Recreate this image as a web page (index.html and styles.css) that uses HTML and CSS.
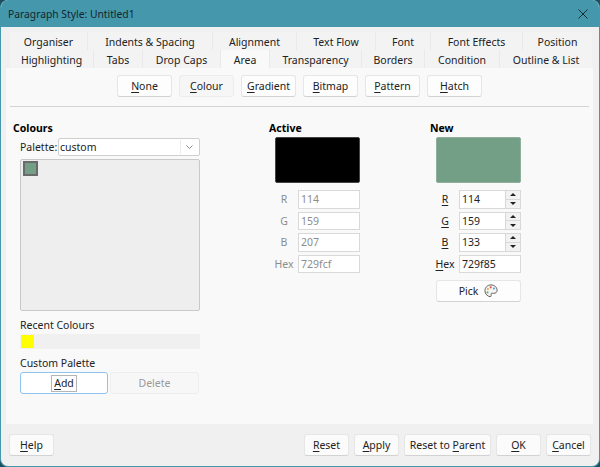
FILE: index.html
```html
<!DOCTYPE html>
<html lang="en">
<head>
    <meta charset="UTF-8">
    <meta name="viewport" content="width=device-width, initial-scale=1.0">
    <title>Paragraph Style: Untitled1</title>
    <link rel="stylesheet" href="styles.css">
</head>
<body>
    <div class="dialog">
        <div class="titlebar">
            <span class="title">Paragraph Style: Untitled1</span>
            <svg class="close-icon" width="10" height="10" viewBox="0 0 10 10">
                <path d="M0.5 0.5L9.5 9.5M9.5 0.5L0.5 9.5" stroke="#1a2a30" stroke-width="1" fill="none"/>
            </svg>
        </div>

        <div class="tabs">
            <div class="tab-row">
                <div class="tab t-organiser">Organiser</div>
                <div class="tab t-indents">Indents &amp; Spacing</div>
                <div class="tab t-alignment">Alignment</div>
                <div class="tab t-textflow">Text Flow</div>
                <div class="tab t-font">Font</div>
                <div class="tab t-effects">Font Effects</div>
                <div class="tab t-position">Position</div>
            </div>
            <div class="tab-row">
                <div class="tab t-highlight">Highlighting</div>
                <div class="tab t-tabs">Tabs</div>
                <div class="tab t-dropcaps">Drop Caps</div>
                <div class="tab t-area active">Area</div>
                <div class="tab t-transparency">Transparency</div>
                <div class="tab t-borders">Borders</div>
                <div class="tab t-condition">Condition</div>
                <div class="tab t-outline">Outline &amp; List</div>
            </div>
        </div>

        <div class="panel">
            <div class="fill-types">
                <button class="btn type-btn"><u>N</u>one</button>
                <button class="btn type-btn pressed"><u>C</u>olour</button>
                <button class="btn type-btn"><u>G</u>radient</button>
                <button class="btn type-btn"><u>B</u>itmap</button>
                <button class="btn type-btn"><u>P</u>attern</button>
                <button class="btn type-btn"><u>H</u>atch</button>
            </div>
            <div class="separator"></div>

            <div class="columns">
                <div class="col-colours">
                    <div class="heading">Colours</div>
                    <div class="palette-row">
                        <span>Palette:</span>
                        <div class="select">
                            <span class="select-value">custom</span>
                            <span class="select-arrow">
                                <svg width="7" height="4" viewBox="0 0 7 4"><path d="M0.5 0.5L3.5 3.5L6.5 0.5" stroke="#8a8a8a" fill="none"/></svg>
                            </span>
                        </div>
                    </div>
                    <div class="swatches">
                        <div class="swatch"></div>
                    </div>
                    <div class="sub-label recent-label">Recent Colours</div>
                    <div class="recent">
                        <div class="recent-swatch"></div>
                    </div>
                    <div class="sub-label custom-label">Custom Palette</div>
                    <div class="palette-actions">
                        <button class="btn action focused"><span class="focus-ring"><u>A</u>dd</span></button>
                        <button class="btn action disabled">Delete</button>
                    </div>
                </div>

                <div class="col-active">
                    <div class="heading">Active</div>
                    <div class="preview preview-active"></div>
                    <div class="fields muted">
                        <div class="field"><label>R</label><div class="input">114</div></div>
                        <div class="field"><label>G</label><div class="input">159</div></div>
                        <div class="field"><label>B</label><div class="input">207</div></div>
                        <div class="field"><label>Hex</label><div class="input">729fcf</div></div>
                    </div>
                </div>

                <div class="col-new">
                    <div class="heading">New</div>
                    <div class="preview preview-new"></div>
                    <div class="fields">
                        <div class="field">
                            <label><u>R</u></label>
                            <div class="spin"><div class="input">114</div><div class="spin-btns"><span class="up"></span><span class="down"></span></div></div>
                        </div>
                        <div class="field">
                            <label><u>G</u></label>
                            <div class="spin"><div class="input">159</div><div class="spin-btns"><span class="up"></span><span class="down"></span></div></div>
                        </div>
                        <div class="field">
                            <label><u>B</u></label>
                            <div class="spin"><div class="input">133</div><div class="spin-btns"><span class="up"></span><span class="down"></span></div></div>
                        </div>
                        <div class="field"><label><u>H</u>ex</label><div class="input input-hex">729f85</div></div>
                    </div>
                    <button class="btn pick">Pick
                        <svg width="14" height="14" viewBox="0 0 15 15">
                            <path d="M7.5 1C3.6 1 1 3.8 1 7.2c0 3.4 2.8 6.3 5.6 6.3 1.5 0 1.4-1.3 1-2-.4-.9.2-1.7 1.2-1.6 1 .1 2.1.3 3.4-.2 1.3-.6 1.8-1.7 1.8-2.9C14 3.4 11.2 1 7.5 1z" fill="#f4f4f4" stroke="#555" stroke-width="1"/>
                            <circle cx="4.2" cy="5.4" r="1.1" fill="#e8a33c"/>
                            <circle cx="7.2" cy="3.6" r="1.1" fill="#d9534f"/>
                            <circle cx="10.6" cy="4.8" r="1.1" fill="#4aa3df"/>
                            <circle cx="3.8" cy="9" r="1.1" fill="#6cb56c"/>
                        </svg>
                    </button>
                </div>
            </div>
        </div>

        <div class="footer">
            <button class="btn foot-btn help"><u>H</u>elp</button>
            <div class="foot-right">
                <button class="btn foot-btn reset"><u>R</u>eset</button>
                <button class="btn foot-btn apply"><u>A</u>pply</button>
                <button class="btn foot-btn parent">Reset to <u>P</u>arent</button>
                <button class="btn foot-btn ok"><u>O</u>K</button>
                <button class="btn foot-btn cancel"><u>C</u>ancel</button>
            </div>
        </div>
    </div>
</body>
</html>
```

FILE: styles.css
```css
:root {
    --teal: #4598ac;
    --dialog-bg: #f0f0f0;
    --panel-bg: #f9f9f9;
    --tab-bg: #f3f3f3;
    --border: #d0d0d0;
    --text: #222222;
    --muted: #8c8c8c;
}

html, body {
    margin: 0;
    padding: 0;
    height: 100%;
    background: #1d4f5c;
}

body {
    font-family: "Noto Sans", "Open Sans", sans-serif;
    font-size: 10.5px;
    color: var(--text);
}

u {
    text-underline-offset: 2px;
    text-decoration-thickness: 1px;
}

.dialog {
    box-sizing: border-box;
    width: 600px;
    height: 467px;
    display: flex;
    flex-direction: column;
    background: var(--dialog-bg);
    border: 1px solid var(--teal);
    border-top: 0;
    border-radius: 8px;
    overflow: hidden;
}

.titlebar {
    flex: none;
    height: 27px;
    margin: 0 -1px;
    padding: 0 12px 0 8px;
    display: flex;
    align-items: center;
    justify-content: space-between;
    background: var(--teal);
    color: #12262c;
}

.title {
    font-size: 10.3px;
}

.tabs {
    flex: none;
    padding: 5px 7px 0 9px;
}

.tab-row {
    display: flex;
    height: 18px;
}

.tab {
    box-sizing: border-box;
    display: flex;
    align-items: center;
    justify-content: center;
    padding-top: 1px;
    background: var(--tab-bg);
    border-right: 1px solid #e9e9e9;
    white-space: nowrap;
}

.tab:last-child {
    border-right: 0;
}

.tab.active {
    background: var(--panel-bg);
}

.t-organiser { width: 78px; }
.t-indents { width: 125px; }
.t-alignment { width: 84px; }
.t-textflow { width: 79px; }
.t-font { width: 55px; }
.t-effects { width: 92px; }
.t-position { flex: 1; }

.t-highlight { width: 84px; }
.t-tabs { width: 49px; }
.t-dropcaps { width: 78px; }
.t-area { width: 49px; }
.t-transparency { width: 92px; }
.t-borders { width: 63px; }
.t-condition { width: 75px; }
.t-outline { flex: 1; }

.panel {
    flex: 1;
    margin: 0 6px 0 5px;
    padding: 7px 4px 0;
    background: var(--panel-bg);
}

.btn {
    box-sizing: border-box;
    margin: 0;
    padding: 0;
    height: 22px;
    font: inherit;
    color: var(--text);
    white-space: nowrap;
    background: #fdfdfd;
    border: 1px solid #e6e6e6;
    border-bottom-color: #d2d2d2;
    border-radius: 3px;
}

.fill-types {
    display: flex;
    justify-content: center;
    gap: 7px;
}

.type-btn {
    width: 55px;
}

.type-btn.pressed {
    background: #f6f6f6;
    border-color: #ececec;
}

.separator {
    height: 1px;
    margin: 9px 0 0;
    background: #d4d4d4;
}

.columns {
    display: flex;
    padding-top: 13px;
}

.heading {
    font-weight: 700;
    height: 17px;
    line-height: 17px;
    color: #000;
}

.col-colours {
    width: 186px;
    margin-left: 4px;
    display: flex;
    flex-direction: column;
}

.col-colours .heading {
    margin-left: -1px;
}

.palette-row {
    display: flex;
    align-items: center;
    justify-content: space-between;
    height: 18px;
    margin: 1px 0 3px 6px;
}

.select {
    box-sizing: border-box;
    flex: none;
    display: flex;
    width: 142px;
    height: 18px;
    background: #fff;
    border: 1px solid #cfcfcf;
    border-radius: 2px;
}

.select-value {
    flex: 1;
    padding-left: 1px;
    line-height: 16px;
}

.select-arrow {
    width: 16px;
    margin: 1px 0;
    padding-right: 2px;
    display: flex;
    align-items: center;
    justify-content: center;
    border-left: 1px solid #ececec;
}

.swatches {
    box-sizing: border-box;
    height: 152px;
    margin-left: 6px;
    padding: 1px 2px;
    background: #eeeeee;
    border: 1px solid #c9c9c9;
    border-radius: 2px;
}

.swatch {
    box-sizing: border-box;
    width: 15px;
    height: 15px;
    background: #729f85;
    border: 2px solid #6a6a6a;
}

.sub-label {
    margin-left: 6px;
    height: 17px;
    line-height: 17px;
}

.recent-label {
    margin-top: 6px;
}

.recent {
    box-sizing: border-box;
    height: 15px;
    margin: 0 0 0 6px;
    padding: 1px;
    background: #f0f0f0;
}

.recent-swatch {
    width: 13px;
    height: 13px;
    background: #ffff00;
}

.custom-label {
    margin-top: 6px;
}

.palette-actions {
    display: flex;
    gap: 2px;
    margin: 0 0 0 6px;
}

.action {
    width: 88px;
}

.action.focused {
    background: #fff;
    border: 1px solid #90c2ee;
}

.focus-ring {
    display: inline-block;
    padding: 0 2px;
    line-height: 15px;
    outline: 1px solid #b5b5b5;
}

.action.disabled {
    width: 89px;
    background: #f7f7f7;
    border-color: #eeeeee;
    color: #9a9a9a;
}

.col-active {
    width: 91px;
    margin-left: 69px;
}

.col-new {
    width: 91px;
    margin-left: 70px;
}

.preview {
    box-sizing: border-box;
    width: 85px;
    height: 46px;
    margin: 0 0 7px 6px;
    border: 1px solid #8a8a8a;
    border-radius: 2px;
}

.preview-active {
    background: #000;
    border-color: #444;
}

.preview-new {
    background: #729f85;
    border-color: #8fae9c;
}

.fields {
    display: flex;
    flex-direction: column;
    gap: 3px;
}

.field {
    display: flex;
    align-items: center;
    justify-content: space-between;
    height: 18.5px;
}

.field label {
    flex: 1;
    padding-left: 1px;
    text-align: center;
}

.muted {
    color: var(--muted);
}

.input {
    box-sizing: border-box;
    width: 62px;
    height: 18.5px;
    padding-left: 2px;
    line-height: 16px;
    background: #fff;
    border: 1px solid #d9d9d9;
}

.spin {
    display: flex;
    width: 62px;
    height: 18.5px;
}

.spin .input {
    width: 46px;
    border-right: 0;
}

.spin-btns {
    box-sizing: border-box;
    width: 16px;
    display: flex;
    flex-direction: column;
    background: #d8d8d8;
    padding: 1px;
    gap: 1px;
}

.spin-btns span {
    flex: 1;
    background: #f2f2f2;
    display: flex;
    align-items: center;
    justify-content: center;
}

.spin-btns .up::before {
    content: "";
    border: 3px solid transparent;
    border-top: 0;
    border-bottom: 3px solid #222;
}

.spin-btns .down::before {
    content: "";
    border: 3px solid transparent;
    border-bottom: 0;
    border-top: 3px solid #222;
}

.pick {
    display: flex;
    align-items: center;
    justify-content: center;
    gap: 6px;
    width: 85px;
    margin: 7px 0 0 6px;
}

.footer {
    flex: none;
    height: 41px;
    padding: 0 8px 1px;
    display: flex;
    align-items: center;
    justify-content: space-between;
}

.foot-right {
    display: flex;
    gap: 5px;
}

.foot-btn {
    background: #fbfbfb;
}

.help { width: 45px; }
.reset { width: 45px; }
.apply { width: 45px; }
.parent { width: 87px; }
.ok { width: 45px; }
.cancel { width: 45px; }
```
